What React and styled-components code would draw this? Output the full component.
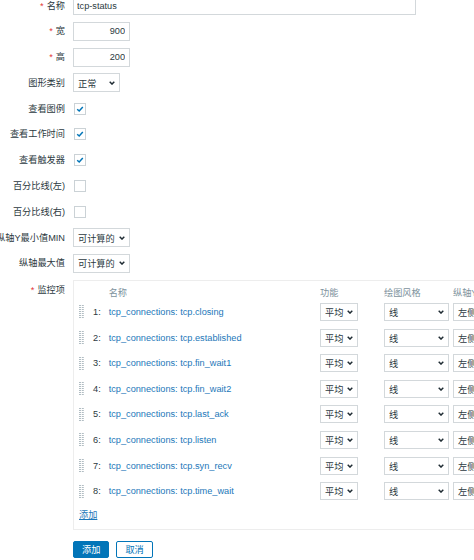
import React from 'react';
import styled, { createGlobalStyle } from 'styled-components';

const Global = createGlobalStyle`
  html, body { margin: 0; padding: 0; background: #fff; overflow: hidden; }
  body {
    font-family: "Liberation Sans", "Noto Sans CJK SC", sans-serif;
    font-size: 9.2px;
    color: #2c3a41;
  }
`;

const Form = styled.div`
  display: flex;
  flex-direction: column;
  margin-top: -7.4px;
`;

const Row = styled.div`
  display: flex;
  align-items: ${p => (p.$top ? 'flex-start' : 'center')};
  height: ${p => (p.$top ? 'auto' : '25.8px')};
  gap: 8px;
`;

const Label = styled.div`
  width: 65px;
  flex: none;
  display: flex;
  justify-content: flex-end;
  white-space: nowrap;
  line-height: 12px;
  padding-top: ${p => p.$pt || 0}px;
`;

const Asterisk = styled.span`
  color: #e33734;
  margin-right: 3px;
`;

const TextInput = styled.input`
  box-sizing: border-box;
  height: 19px;
  width: ${p => p.$w}px;
  border: 1px solid #d3d8db;
  padding: 0 ${p => (p.$right ? 4 : 3)}px;
  text-align: ${p => (p.$right ? 'right' : 'left')};
  font: inherit;
  color: #2c3a41;
  background: #fff;
  outline: none;
  margin: 0;
`;

const SelectBox = styled.div`
  box-sizing: border-box;
  height: ${p => p.$h || 19}px;
  width: ${p => p.$w}px;
  border: 1px solid #d3d8db;
  background: #fff;
  display: flex;
  align-items: center;
  justify-content: space-between;
  padding: 0 4px 0 4px;
  white-space: nowrap;
  overflow: hidden;
`;

const CheckBox = styled.div`
  box-sizing: border-box;
  width: 12px;
  height: 12px;
  margin-left: 1px;
  border: 1px solid #cbd2d6;
  background: #fff;
  display: flex;
  align-items: center;
  justify-content: center;
`;

const Box = styled.div`
  box-sizing: border-box;
  margin-top: 3.6px;
  width: 520px;
  flex: none;
  border: 1px solid #ededed;
  padding: 4px 0 5px 5px;
`;

const Grid = styled.div`
  display: grid;
  grid-template-columns: 14px 15.7px 211.3px 64px 69px 80px;
  align-items: center;
  height: ${p => p.$h}px;
`;

const HeadCell = styled.div`
  color: #7d929d;
  white-space: nowrap;
`;

const Num = styled.div`
  white-space: nowrap;
`;

const ItemLink = styled.span`
  color: #1c77b9;
  white-space: nowrap;
`;

const AddLink = styled.div`
  height: 20px;
  display: flex;
  align-items: center;
  span {
    color: #1c77b9;
    text-decoration: underline;
    text-underline-offset: 1px;
  }
`;

const Buttons = styled.div`
  display: flex;
  gap: 7px;
  margin: 11px 0 0 73px;
`;

const Button = styled.div`
  box-sizing: border-box;
  height: 17px;
  padding: 0 8px;
  display: flex;
  align-items: center;
  border-radius: 2px;
  border: 1px solid #0275b8;
  background: ${p => (p.$primary ? '#0275b8' : '#fff')};
  color: ${p => (p.$primary ? '#fff' : '#0275b8')};
`;

const Chevron = () => (
  <svg width="6" height="4" viewBox="0 0 6 4">
    <path d="M0.7 0.7 L3 3.1 L5.3 0.7" fill="none" stroke="#1f2c33" strokeWidth="1.4" />
  </svg>
);

const Check = () => (
  <svg width="10" height="10" viewBox="0 0 10 10">
    <path d="M2.2 5.2 L4.2 7 L7.8 3" fill="none" stroke="#0275b8" strokeWidth="1.5" />
  </svg>
);

const Grip = () => (
  <svg width="5" height="13" viewBox="0 0 5 13">
    {[0, 2, 4, 6, 8, 10, 12].map(y => (
      <g key={y} fill="#a9b6bd">
        <rect x="0" y={y} width="2" height="0.9" />
        <rect x="2.8" y={y} width="2" height="0.9" />
      </g>
    ))}
  </svg>
);

const Select = ({ w, h, children }) => (
  <SelectBox $w={w} $h={h}>
    <span>{children}</span>
    <Chevron />
  </SelectBox>
);

const items = [
  'tcp.closing',
  'tcp.established',
  'tcp.fin_wait1',
  'tcp.fin_wait2',
  'tcp.last_ack',
  'tcp.listen',
  'tcp.syn_recv',
  'tcp.time_wait',
];

const FieldLabel = ({ req, children, pt }) => (
  <Label $pt={pt}>
    {req && <Asterisk>*</Asterisk>}
    {children}
  </Label>
);

export default function App() {
  return (
    <>
      <Global />
      <Form>
        <Row>
          <FieldLabel req>名称</FieldLabel>
          <TextInput $w={343} readOnly value="tcp-status" />
        </Row>
        <Row>
          <FieldLabel req>宽</FieldLabel>
          <TextInput $w={57} $right readOnly value="900" />
        </Row>
        <Row>
          <FieldLabel req>高</FieldLabel>
          <TextInput $w={57} $right readOnly value="200" />
        </Row>
        <Row>
          <FieldLabel>图形类别</FieldLabel>
          <Select w={47}>正常</Select>
        </Row>
        <Row>
          <FieldLabel>查看图例</FieldLabel>
          <CheckBox><Check /></CheckBox>
        </Row>
        <Row>
          <FieldLabel>查看工作时间</FieldLabel>
          <CheckBox><Check /></CheckBox>
        </Row>
        <Row>
          <FieldLabel>查看触发器</FieldLabel>
          <CheckBox><Check /></CheckBox>
        </Row>
        <Row>
          <FieldLabel>百分比线(左)</FieldLabel>
          <CheckBox />
        </Row>
        <Row>
          <FieldLabel>百分比线(右)</FieldLabel>
          <CheckBox />
        </Row>
        <Row>
          <FieldLabel>纵轴Y最小值MIN</FieldLabel>
          <Select w={57}>可计算的</Select>
        </Row>
        <Row>
          <FieldLabel>纵轴最大值</FieldLabel>
          <Select w={57}>可计算的</Select>
        </Row>
        <Row $top>
          <FieldLabel req pt={7.6}>监控项</FieldLabel>
          <Box>
            <Grid $h={14.2}>
              <span />
              <span />
              <HeadCell>名称</HeadCell>
              <HeadCell>功能</HeadCell>
              <HeadCell>绘图风格</HeadCell>
              <HeadCell>纵轴Y侧</HeadCell>
            </Grid>
            {items.map((it, i) => (
              <Grid key={it} $h={25.6}>
                <Grip />
                <Num>{i + 1}:</Num>
                <ItemLink>tcp_connections: {it}</ItemLink>
                <Select w={38} h={18}>平均</Select>
                <Select w={65} h={18}>线</Select>
                <Select w={60} h={18}>左侧</Select>
              </Grid>
            ))}
            <AddLink><span>添加</span></AddLink>
          </Box>
        </Row>
      </Form>
      <Buttons>
        <Button $primary>添加</Button>
        <Button>取消</Button>
      </Buttons>
    </>
  );
}
